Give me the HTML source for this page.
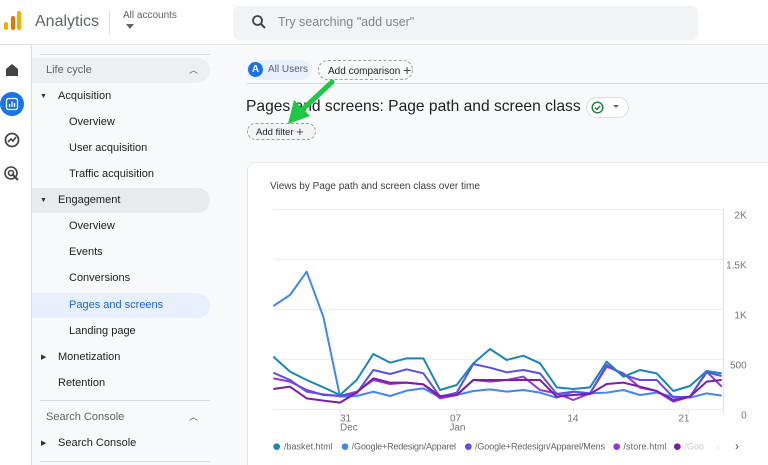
<!DOCTYPE html>
<html><head><meta charset="utf-8"><style>
*{margin:0;padding:0;box-sizing:border-box}
html,body{width:768px;height:465px;overflow:hidden}
body{background:#f8f9fa;font-family:"Liberation Sans",Arial,sans-serif;color:#202124;position:relative}
.a{position:absolute}
.hdr{left:0;top:0;width:768px;height:45px;background:#fff;border-bottom:1px solid #e3e3e3}
.rail{left:0;top:45px;width:32px;height:420px;background:#fff;border-right:1px solid #dadce0}
.nav{left:32px;top:45px;width:190px;height:420px;background:#f8f9fa}
.it{position:absolute;left:0;width:178px;height:25px;font-size:11px;line-height:25px;color:#202124;border-radius:0 13px 13px 0}
.tri{position:absolute;font-size:7px;color:#333}
</style></head><body>
<div class="a hdr"></div>
<div class="a" style="left:4px;top:22px;width:4px;height:8px;background:#f9ab00;border-radius:2px"></div>
<div class="a" style="left:11px;top:16px;width:4px;height:14px;background:#e37400;border-radius:2px"></div>
<div class="a" style="left:17px;top:11px;width:4px;height:19px;background:#f9ab00;border-radius:2px"></div>
<div class="a" style="left:35px;top:13px;font-size:16px;color:#5f6368">Analytics</div>
<div class="a" style="left:109px;top:11px;width:1px;height:24px;background:#e0e0e0"></div>
<div class="a" style="left:123px;top:10px;font-size:10px;color:#5f6368">All accounts</div>
<div class="a" style="left:126px;top:24px;width:0;height:0;border-left:4px solid transparent;border-right:4px solid transparent;border-top:5px solid #5f6368"></div>
<div class="a" style="left:233px;top:6px;width:465px;height:34px;background:#f1f3f4;border-radius:6px"></div>
<svg class="a" style="left:251px;top:14px" width="16" height="16" viewBox="0 0 16 16"><circle cx="6.5" cy="6.5" r="4.5" fill="none" stroke="#444" stroke-width="1.8"/><path d="M10 10l4 4" stroke="#444" stroke-width="2"/></svg>
<div class="a" style="left:278px;top:15px;font-size:12.5px;color:#80868b">Try searching "add user"</div>

<div class="a rail"></div>
<svg class="a" style="left:4px;top:62px" width="16" height="16" viewBox="0 0 16 16"><path d="M2 7L8 2l6 5v7H2z" fill="#444"/></svg>
<div class="a" style="left:0;top:92px;width:24px;height:24px;border-radius:12px;background:#1a73e8"></div>
<svg class="a" style="left:5px;top:97px" width="14" height="14" viewBox="0 0 14 14"><rect x="1.5" y="1.5" width="11" height="11" rx="2" fill="none" stroke="#fff" stroke-width="1.3"/><path d="M4.5 10V7M7 10V4.5M9.5 10V6" stroke="#fff" stroke-width="1.3"/></svg>
<svg class="a" style="left:3px;top:131px" width="18" height="18" viewBox="0 0 18 18"><circle cx="9" cy="9" r="6.5" fill="none" stroke="#444" stroke-width="1.8"/><path d="M5 11l3-3 2 2 3-4" fill="none" stroke="#444" stroke-width="1.6"/></svg>
<svg class="a" style="left:3px;top:165px" width="18" height="18" viewBox="0 0 18 18"><circle cx="8" cy="8" r="6" fill="none" stroke="#444" stroke-width="1.6"/><circle cx="8" cy="8" r="2.5" fill="none" stroke="#444" stroke-width="1.6"/><path d="M9 9l6 6" stroke="#444" stroke-width="2"/></svg>

<div class="a nav">
<div class="a" style="left:8px;top:9px;width:170px;height:1px;background:#dadce0"></div>
<div class="it" style="top:13px;background:#eeeff1;color:#5f6368;padding-left:14px">Life cycle<span style="position:absolute;right:12px;font-size:9px">︿</span></div>
<div class="tri" style="left:8px;top:48px">▼</div>
<div class="it" style="top:39px;padding-left:26px">Acquisition</div>
<div class="it" style="top:65px;padding-left:37px">Overview</div>
<div class="it" style="top:91px;padding-left:37px">User acquisition</div>
<div class="it" style="top:117px;padding-left:37px">Traffic acquisition</div>
<div class="it" style="top:143px;background:#e8eaed;padding-left:26px">Engagement</div>
<div class="tri" style="left:8px;top:152px">▼</div>
<div class="it" style="top:169px;padding-left:37px">Overview</div>
<div class="it" style="top:195px;padding-left:37px">Events</div>
<div class="it" style="top:221px;padding-left:37px">Conversions</div>
<div class="it" style="top:248px;background:#e8f0fe;color:#1967d2;padding-left:37px">Pages and screens</div>
<div class="it" style="top:274px;padding-left:37px">Landing page</div>
<div class="tri" style="left:9px;top:308px">▶</div>
<div class="it" style="top:300px;padding-left:26px">Monetization</div>
<div class="it" style="top:326px;padding-left:26px">Retention</div>
<div class="a" style="left:8px;top:355px;width:170px;height:1px;background:#dadce0"></div>
<div class="it" style="top:360px;color:#5f6368;padding-left:14px">Search Console<span style="position:absolute;right:12px;font-size:9px">︿</span></div>
<div class="tri" style="left:9px;top:394px">▶</div>
<div class="it" style="top:386px;padding-left:26px">Search Console</div>
<div class="a" style="left:8px;top:416px;width:170px;height:1px;background:#dadce0"></div>
</div>

<div class="a" style="left:247px;top:60px;width:64px;height:20px;background:#e8f0fe;border-radius:10px"></div>
<div class="a" style="left:248px;top:62px;width:15px;height:15px;border-radius:8px;background:#1a73e8;color:#fff;font-size:10px;font-weight:bold;text-align:center;line-height:15px">A</div>
<div class="a" style="left:268px;top:64px;font-size:10px;color:#5f6368">All Users</div>
<div class="a" style="left:318px;top:60px;width:95px;height:20px;border:1px dashed #9aa0a6;border-radius:10px;font-size:10px;line-height:18px;padding-left:9px;color:#202124;white-space:nowrap">Add comparison <span style="font-size:14px;vertical-align:-1px;color:#444">+</span></div>
<div class="a" style="left:247px;top:83px;width:521px;height:1px;background:#dadce0"></div>
<div class="a" style="left:246px;top:98px;font-size:15.6px;color:#202124;white-space:nowrap">Pages and screens: Page path and screen class</div>
<div class="a" style="left:586px;top:97px;width:43px;height:21px;border:1px solid #dadce0;border-radius:11px;background:#fff"></div>
<svg class="a" style="left:591px;top:101px" width="13" height="13" viewBox="0 0 13 13"><circle cx="6.5" cy="6.5" r="5.3" fill="none" stroke="#188038" stroke-width="1.4"/><path d="M4 6.7l1.8 1.8 3.3-3.5" fill="none" stroke="#188038" stroke-width="1.4"/></svg>
<div class="a" style="left:613px;top:105px;border-left:3px solid transparent;border-right:3px solid transparent;border-top:3px solid #5f6368"></div>
<div class="a" style="left:247px;top:123px;width:69px;height:17px;border:1px dashed #9aa0a6;border-radius:9px;font-size:9.5px;line-height:15px;padding-left:8px;background:#f1f3f4;white-space:nowrap">Add filter <span style="font-size:13px;vertical-align:-1px;color:#444">+</span></div>
<svg class="a" style="left:280px;top:78px" width="60" height="52" viewBox="0 0 60 52"><path d="M52 4L22 32" stroke="#1ec744" stroke-width="5" stroke-linecap="round"/><path d="M8 46L14 22L30 38z" fill="#1ec744"/></svg>

<div class="a" style="left:247px;top:162px;width:540px;height:320px;background:#fff;border:1px solid #e6e6e6;border-radius:8px"></div>
<div class="a" style="left:270px;top:181px;font-size:10px;color:#3c4043">Views by Page path and screen class over time</div>
<svg class="a" style="left:250px;top:200px" width="518" height="265" viewBox="0 0 1554 795" font-family="Liberation Sans,Arial,sans-serif">
<g stroke="#ebebeb" stroke-width="3"><path d="M70 28H1420M70 178H1420M70 328H1420M70 478H1420M70 628H1420"/></g>
<path d="M1420 28V640" stroke="#e0e0e0" stroke-width="3"/>
<g stroke="#e0e0e0" stroke-width="3"><path d="M270 628v12M620 628v12M970 628v12M1315 628v12"/></g>
<g font-size="30" fill="#70757a" text-anchor="end"><text x="1490" y="56">2K</text><text x="1490" y="205">1.5K</text><text x="1490" y="355">1K</text><text x="1490" y="505">500</text><text x="1490" y="655">0</text></g>
<g font-size="30" fill="#70757a"><text x="270" y="665">31</text><text x="270" y="692">Dec</text><text x="600" y="665">07</text><text x="598" y="692">Jan</text><text x="952" y="665">14</text><text x="1285" y="665">21</text></g>
<g fill="none" stroke-width="6" stroke-linejoin="round">
<polyline stroke="#4285f4" points="70,318 120,285 170,215 220,350 270,590 320,588 370,575 420,588 470,572 520,565 570,592 620,585 670,573 720,568 770,575 820,570 870,578 920,593 970,575 1020,580 1070,578 1120,570 1170,585 1220,578 1270,590 1320,593 1370,580 1415,587"/>
<polyline stroke="#9334e6" points="70,535 120,545 170,570 220,585 270,588 320,575 370,540 420,552 470,548 520,553 570,595 620,585 670,540 720,545 770,540 820,530 870,570 920,580 970,600 1020,580 1070,500 1120,520 1170,563 1220,573 1270,605 1320,590 1370,515 1415,560"/>
<polyline stroke="#5c4ee8" points="70,518 120,540 170,575 220,583 270,588 320,580 370,510 420,522 470,508 520,520 570,590 620,578 670,492 720,503 770,517 820,510 870,520 920,582 970,575 1020,580 1070,495 1120,525 1170,540 1220,540 1270,592 1320,590 1370,517 1415,528"/>
<polyline stroke="#7b1fa2" points="70,567 120,560 170,595 220,602 270,608 320,578 370,535 420,548 470,548 520,553 570,588 620,585 670,540 720,540 770,540 820,540 870,540 920,590 970,585 1020,582 1070,552 1120,548 1170,560 1220,573 1270,600 1320,590 1370,545 1415,540"/>
<polyline stroke="#1a86b5" points="70,470 120,515 170,540 220,562 270,585 320,540 370,462 420,488 470,475 520,475 570,570 620,555 670,490 720,447 770,480 820,467 870,490 920,562 970,567 1020,562 1070,485 1120,530 1170,510 1220,520 1270,573 1320,558 1370,513 1415,520"/>
</g>
<g font-size="27" fill="#5f6368">
<circle cx="80" cy="740" r="10" fill="#1a86b5"/><text x="102" y="749" textLength="146">/basket.html</text>
<circle cx="285" cy="740" r="10" fill="#4285f4"/><text x="305" y="749" textLength="313">/Google+Redesign/Apparel</text>
<circle cx="655" cy="740" r="10" fill="#5c4ee8"/><text x="675" y="749" textLength="390">/Google+Redesign/Apparel/Mens</text>
<circle cx="1100" cy="740" r="10" fill="#9334e6"/><text x="1120" y="749" textLength="130">/store.html</text>
<circle cx="1282" cy="740" r="10" fill="#7b1fa2"/><text x="1303" y="749" fill="#c8c8c8">/Goo</text>
<text x="1400" y="750" fill="#ddd">‹</text><text x="1455" y="750" fill="#444" font-size="36">›</text>
</g>
</svg>
</body></html>
